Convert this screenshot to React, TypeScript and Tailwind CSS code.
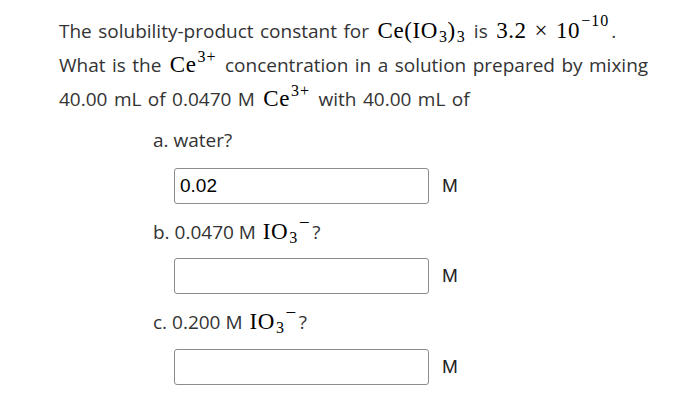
import React from 'react';

function M({ children }: { children: React.ReactNode }) {
  return (
    <span className="mx-[2px] font-['Liberation_Serif',serif] text-[23px] leading-none tracking-[0.6px] text-black">
      {children}
    </span>
  );
}

function Sub({ children }: { children: React.ReactNode }) {
  return <span className="relative top-[4px] ml-[1px] text-[16px] leading-none">{children}</span>;
}

function Sup({ children, high }: { children: React.ReactNode; high?: boolean }) {
  return (
    <span
      className={`relative ml-[1px] text-[16px] leading-none tracking-[1px] ${high ? 'top-[-12px]' : 'top-[-10px]'}`}
    >
      {children}
    </span>
  );
}

function Minus() {
  return <span className="relative top-[-10px] ml-[1px] text-[19px] leading-none">−</span>;
}

function Answer({ value }: { value?: string }) {
  return (
    <div className="flex items-center pl-[21px]">
      <input
        defaultValue={value}
        className="h-[36px] w-[255px] rounded-[3px] border border-[#8c8c8c] px-[5px] font-['Liberation_Sans',sans-serif] text-[19px] text-black outline-none"
      />
      <span className="ml-[13px] font-['Liberation_Sans',sans-serif] text-[19px] text-[#222]">M</span>
    </div>
  );
}

export default function App() {
  return (
    <div className="min-h-screen bg-white font-['Open_Sans',sans-serif] text-[19px] text-[#333]">
      <div className="pl-[59px] pt-[14px] leading-[34px] [word-spacing:1.5px]">
        <p>
          The solubility-product constant for{' '}
          <M>
            Ce(IO<Sub>3</Sub>)<Sub>3</Sub>
          </M>{' '}
          is{' '}
          <M>
            3.2 × 10<Sup high>−10</Sup>
          </M>
          .
        </p>
        <p>
          What is the{' '}
          <M>
            Ce<Sup>3+</Sup>
          </M>{' '}
          concentration in a solution prepared by mixing
        </p>
        <p>
          40.00 mL of 0.0470 M{' '}
          <M>
            Ce<Sup>3+</Sup>
          </M>{' '}
          with 40.00 mL of
        </p>
      </div>

      <div className="flex flex-col pl-[153px] leading-[24px]">
        <p className="mt-[12px]">a. water?</p>
        <div className="mt-[16px]">
          <Answer value="0.02" />
        </div>
        <p className="mt-[16px]">
          b. 0.0470 M{' '}
          <M>
            IO<Sub>3</Sub>
            <Minus />
          </M>
          ?
        </p>
        <div className="mt-[14px]">
          <Answer />
        </div>
        <p className="mt-[16px]">
          c. 0.200 M{' '}
          <M>
            IO<Sub>3</Sub>
            <Minus />
          </M>
          ?
        </p>
        <div className="mt-[15px]">
          <Answer />
        </div>
      </div>
    </div>
  );
}
